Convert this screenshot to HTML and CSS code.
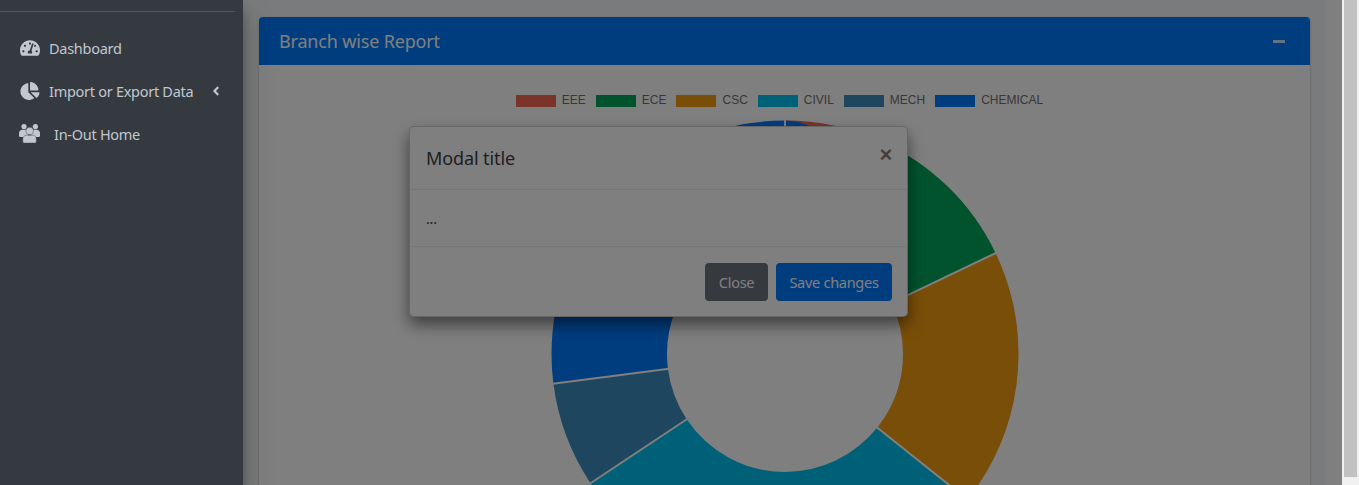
FILE: index.html
```html
<!DOCTYPE html>
<html lang="en">
<head>
    <meta charset="UTF-8">
    <meta name="viewport" content="width=device-width, initial-scale=1.0">
    <title>Branch wise Report</title>
    <link rel="stylesheet" href="styles.css">
</head>
<body>
    <div class="wrapper">
        <aside class="sidebar">
            <div class="sidebar-divider"></div>
            <nav class="nav">
                <a class="nav-link" href="#">
                    <svg class="nav-icon" viewBox="0 0 576 512"><path d="M288 32C128.94 32 0 160.94 0 320c0 52.8 14.25 102.26 39.06 144.8 5.61 9.62 16.3 15.2 27.44 15.2h443c11.14 0 21.83-5.58 27.44-15.2C561.75 422.26 576 372.8 576 320c0-159.06-128.94-288-288-288zm0 64c14.71 0 26.58 10.13 30.32 23.65-1.11 2.26-2.64 4.23-3.45 6.67l-9.22 27.67c-5.13 3.49-10.97 6.01-17.64 6.01-17.67 0-32-14.33-32-32S270.33 96 288 96zM96 384c-17.67 0-32-14.33-32-32s14.33-32 32-32 32 14.33 32 32-14.33 32-32 32zm48-160c-17.67 0-32-14.33-32-32s14.33-32 32-32 32 14.33 32 32-14.33 32-32 32zm246.77-72.41l-61.33 184C343.13 347.33 352 364.54 352 384c0 11.72-3.38 22.55-8.88 32H232.88c-5.5-9.45-8.88-20.28-8.88-32 0-33.94 26.5-61.43 59.9-63.59l61.34-184.01c4.17-12.56 17.73-19.45 30.36-15.17 12.57 4.19 19.35 17.77 15.17 30.36zm14.66 57.2l15.52-46.55c3.47-1.29 7.13-2.23 11.05-2.23 17.67 0 32 14.33 32 32s-14.33 32-32 32c-11.38-.01-20.89-6.28-26.57-15.22zM480 384c-17.67 0-32-14.33-32-32s14.33-32 32-32 32 14.33 32 32-14.33 32-32 32z"/></svg>
                    <span class="nav-text">Dashboard</span>
                </a>
                <a class="nav-link" href="#">
                    <svg class="nav-icon" viewBox="0 0 544 512"><path d="M527.79 288H290.5l158.03 158.03c6.04 6.04 15.98 6.53 22.19.68 38.7-36.46 65.32-85.61 73.13-140.86 1.34-9.46-6.51-17.85-16.06-17.85zm-15.83-64.8C503.72 103.74 408.26 8.28 288.8.04 279.68-.59 272 7.1 272 16.24V240h223.77c9.14 0 16.82-7.68 16.19-16.8zM224 288V50.71c0-9.55-8.39-17.4-17.84-16.06C86.99 51.49-4.1 155.6.14 280.37 4.5 408.51 114.83 513.59 243.03 511.98c50.4-.63 96.97-16.87 135.26-44.03 7.9-5.6 8.42-17.23 1.57-24.08L224 288z"/></svg>
                    <span class="nav-text">Import or Export Data</span>
                    <svg class="nav-arrow" viewBox="0 0 256 512"><path d="M31.7 239l136-136c9.4-9.4 24.6-9.4 33.9 0l22.6 22.6c9.4 9.4 9.4 24.6 0 33.9L127.9 256l96.4 96.4c9.4 9.4 9.4 24.6 0 33.9L201.7 409c-9.4 9.4-24.6 9.4-33.9 0l-136-136c-9.5-9.4-9.5-24.6-.1-34z"/></svg>
                </a>
                <a class="nav-link" href="#">
                    <svg class="nav-icon nav-icon-group" viewBox="0 0 21 19">
                        <circle cx="5" cy="2.600" r="2.600"/>
                        <circle cx="16.400" cy="2.600" r="2.600"/>
                        <path d="M0 9.200C0 7 1.600 5.800 3 5.800h6v7.200H1.600C.7 13 0 12.300 0 11.400z"/>
                        <path d="M21 9.200c0-2.200-1.600-3.400-3-3.400h-6v7.200h7.400c.9 0 1.600-.7 1.600-1.600z"/>
                        <g class="group-front">
                            <circle cx="10.700" cy="7" r="3.800"/>
                            <path d="M3.800 15c0-2.200 1.700-3.700 3.500-3.700h6.800c1.800 0 3.200 1.500 3.200 3.700v2.400c0 .9-.7 1.600-1.600 1.600H5.400c-.9 0-1.600-.7-1.600-1.600z"/>
                        </g>
                    </svg>
                    <span class="nav-text">In-Out Home</span>
                </a>
            </nav>
        </aside>

        <main class="content">
            <section class="card">
                <header class="card-header">
                    <h3 class="card-title">Branch wise Report</h3>
                    <span class="card-minus"></span>
                </header>
                <div class="card-body">
                    <ul class="legend">
                        <li class="legend-item"><span class="swatch swatch-eee"></span>EEE</li>
                        <li class="legend-item"><span class="swatch swatch-ece"></span>ECE</li>
                        <li class="legend-item"><span class="swatch swatch-csc"></span>CSC</li>
                        <li class="legend-item"><span class="swatch swatch-civil"></span>CIVIL</li>
                        <li class="legend-item"><span class="swatch swatch-mech"></span>MECH</li>
                        <li class="legend-item"><span class="swatch swatch-chemical"></span>CHEMICAL</li>
                    </ul>
                    <svg class="donut" viewBox="-234 -234 468 468">
                        <g transform="rotate(-90)" fill="none" stroke-width="115.500">
                            <circle r="175.750" pathLength="360" stroke="#f56954" stroke-dasharray="24 336"/>
                            <circle r="175.750" pathLength="360" stroke="#00a65a" stroke-dasharray="40.400 319.600" stroke-dashoffset="-24"/>
                            <circle r="175.750" pathLength="360" stroke="#f39c12" stroke-dasharray="64.200 295.800" stroke-dashoffset="-64.400"/>
                            <circle r="175.750" pathLength="360" stroke="#00c0ef" stroke-dasharray="107.800 252.200" stroke-dashoffset="-128.600"/>
                            <circle r="175.750" pathLength="360" stroke="#3c8dbc" stroke-dasharray="26.300 333.700" stroke-dashoffset="-236.400"/>
                            <circle r="175.750" pathLength="360" stroke="#007bff" stroke-dasharray="97.300 262.700" stroke-dashoffset="-262.700"/>
                        </g>
                        <g stroke="#fff" stroke-width="2">
                            <line y1="-117" y2="-234"/>
                            <line y1="-117" y2="-234" transform="rotate(24)"/>
                            <line y1="-117" y2="-234" transform="rotate(64.400)"/>
                            <line y1="-117" y2="-234" transform="rotate(128.600)"/>
                            <line y1="-117" y2="-234" transform="rotate(236.400)"/>
                            <line y1="-117" y2="-234" transform="rotate(262.700)"/>
                        </g>
                    </svg>
                </div>
            </section>
        </main>

        <div class="modal">
            <div class="modal-header">
                <h5 class="modal-title">Modal title</h5>
                <span class="modal-close">&times;</span>
            </div>
            <div class="modal-body">...</div>
            <div class="modal-footer">
                <button class="btn btn-secondary">Close</button>
                <button class="btn btn-primary">Save changes</button>
            </div>
        </div>

        <div class="backdrop"></div>

        <div class="scrollbar"><div class="scrollbar-thumb"></div></div>
    </div>
</body>
</html>
```

FILE: styles.css
```css
* {
    box-sizing: border-box;
}
html, body {
    height: 100%;
    margin: 0;
    overflow: hidden;
}
body {
    background-color: #fff;
    color: #3a3f44;
    font-family: "Noto Sans", Arial, sans-serif;
    font-size: 14.5px;
    letter-spacing: -0.28px;
}
.wrapper {
    position: relative;
    display: flex;
    height: 100%;
}

/* sidebar sits above the backdrop */
.sidebar {
    position: relative;
    z-index: 3;
    flex: 0 0 243px;
    padding-top: 11px;
    background-color: #343a40;
    box-shadow: 0 14px 28px rgba(0, 0, 0, 0.25), 0 10px 10px rgba(0, 0, 0, 0.22);
}
.sidebar-divider {
    height: 1px;
    margin-right: 8px;
    background-color: #4f5962;
}
.nav {
    margin-top: 14px;
}
.nav-link {
    display: flex;
    align-items: center;
    height: 43px;
    padding-left: 20px;
    color: #c2c7d0;
    text-decoration: none;
}
.nav-icon {
    flex: 0 0 20px;
    height: 18px;
    margin-right: 9px;
    fill: #c2c7d0;
}
.nav-icon-group {
    flex-basis: 21px;
    height: 19px;
    margin-left: -1px;
    margin-right: 14px;
}
.group-front {
    stroke: #343a40;
    stroke-width: 0.4;
}
.nav-arrow {
    width: 8px;
    height: 14px;
    margin-left: 19px;
    fill: #c2c7d0;
}

/* main area */
.content {
    flex: 1;
    min-width: 0;
    margin-right: 34px;
    padding: 17px 15px 0 16px;
    background-color: #f4f6f9;
}
.card {
    background-color: #fff;
    border-radius: 4px 4px 0 0;
    box-shadow: 0 0 1px rgba(0, 0, 0, 0.125), 0 1px 3px rgba(0, 0, 0, 0.2);
}
.card-header {
    display: flex;
    justify-content: space-between;
    align-items: center;
    height: 48px;
    padding: 0 25px 0 20px;
    background-color: #007bff;
    border-radius: 4px 4px 0 0;
    color: #fff;
}
.card-title {
    margin: 0;
    font-size: 18px;
    font-weight: 400;
    letter-spacing: -0.17px;
}
.card-minus {
    width: 12px;
    height: 3px;
    background-color: rgba(255, 255, 255, 0.8);
}
.card-body {
    display: flex;
    flex-direction: column;
    align-items: center;
    padding-top: 30px;
}
.legend {
    display: flex;
    margin: 0;
    padding: 0;
    list-style: none;
    color: #707070;
    font-family: "Liberation Sans", Arial, sans-serif;
    font-size: 12px;
    letter-spacing: 0;
    line-height: 10px;
}
.legend-item {
    display: flex;
    margin-right: 10px;
}
.swatch {
    width: 40px;
    height: 12px;
    margin-right: 6px;
}
.swatch-eee { background-color: #f56954; }
.swatch-ece { background-color: #00a65a; }
.swatch-csc { background-color: #f39c12; }
.swatch-civil { background-color: #00c0ef; }
.swatch-mech { background-color: #3c8dbc; }
.swatch-chemical { background-color: #007bff; }
.donut {
    flex: none;
    width: 468px;
    height: 468px;
    margin-top: 12.5px;
}

/* modal ends up under the backdrop */
.modal {
    position: absolute;
    z-index: 1;
    top: 126px;
    left: 409px;
    width: 499px;
    background-color: #fff;
    border: 1px solid rgba(0, 0, 0, 0.2);
    border-radius: 4.8px;
    box-shadow: 0 8px 16px rgba(0, 0, 0, 0.5);
}
.modal-header {
    display: flex;
    justify-content: space-between;
    padding: 16px 15px 16px 16px;
    border-bottom: 1px solid #e9ecef;
}
.modal-title {
    margin: 0;
    font-size: 18px;
    font-weight: 400;
    letter-spacing: -0.1px;
    line-height: 30px;
}
.modal-close {
    color: #000;
    font-family: "Liberation Sans", Arial, sans-serif;
    font-size: 22px;
    font-weight: 700;
    line-height: 24px;
    opacity: 0.5;
    text-shadow: 0 1px 0 #fff;
}
.modal-body {
    height: 56px;
    padding: 16px;
    line-height: 24px;
}
.modal-footer {
    display: flex;
    justify-content: flex-end;
    gap: 8px;
    padding: 16px 15px 15px;
    border-top: 1px solid #e9ecef;
}
.btn {
    height: 38px;
    padding: 0 12px;
    border: 1px solid transparent;
    border-radius: 4px;
    color: #fff;
    font-family: inherit;
    font-size: 14.5px;
    letter-spacing: -0.28px;
}
.btn-secondary {
    width: 63px;
    background-color: #6c757d;
}
.btn-primary {
    width: 116px;
    background-color: #007bff;
}

.backdrop {
    position: absolute;
    z-index: 2;
    top: 0;
    right: 0;
    bottom: 0;
    left: 0;
    background-color: rgba(0, 0, 0, 0.5);
}

/* page scrollbar */
.scrollbar {
    position: absolute;
    z-index: 3;
    top: 0;
    right: 0;
    bottom: 0;
    width: 17px;
    padding: 0 2px;
    background-color: #f1f1f1;
}
.scrollbar-thumb {
    height: 477px;
    background-color: #c1c1c1;
}
```
